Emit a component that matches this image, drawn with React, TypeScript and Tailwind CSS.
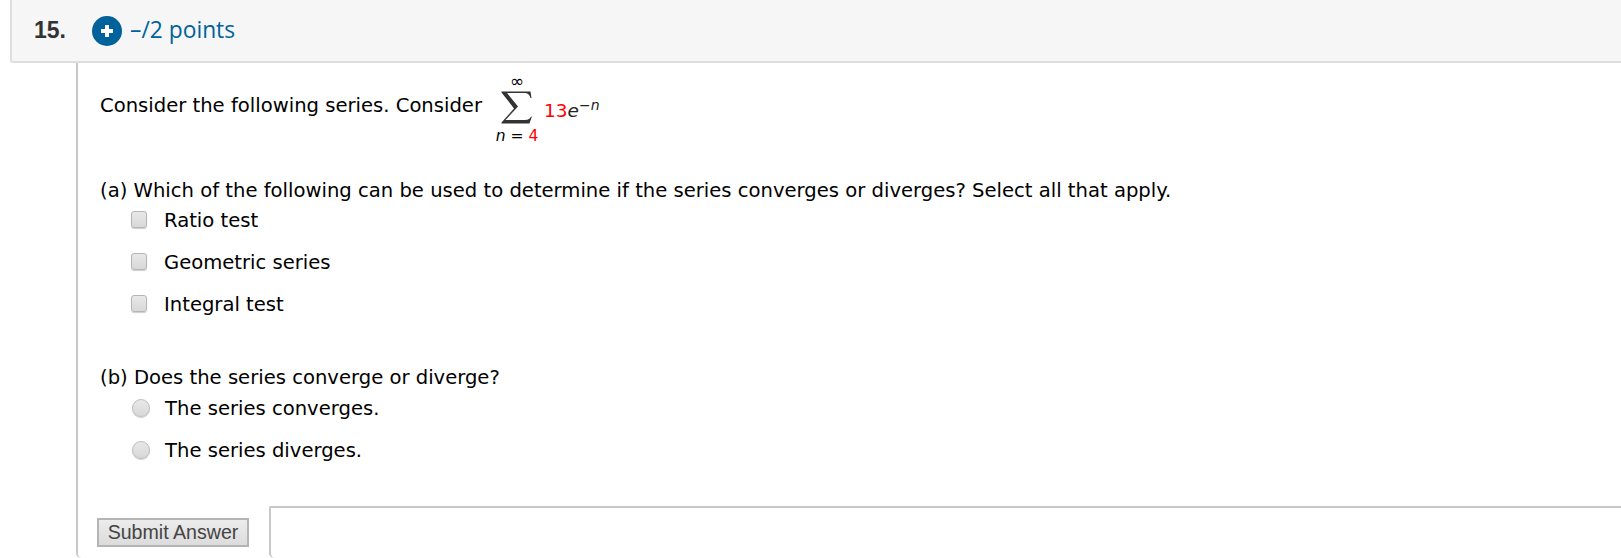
function Sum() {
  return (
    <span className="mr-[5px] ml-[13px] flex w-[44px] flex-col items-center">
      <span className="-mt-[4px] h-[16px] text-[17px] leading-[12px]">∞</span>
      <svg width="31" height="33" viewBox="0 0 31 33" className="block">
        <path d="M0.5 0.5H29.5L30.5 7H29.5C28.5 3.5 27 2 23 2H6L17 15.5L4.5 29H24C27.5 29 29 27.5 30 25.5L30.8 25.8L28.5 32.5H0.5V31.6L13 17.5L0.5 1.4Z" fill="#333" />
      </svg>
      <span className="mt-[6px] text-[15.5px] leading-[12px] whitespace-pre">
        <i>n</i> = <span className="text-[#ff0000]">4</span>
      </span>
    </span>
  );
}

function Check({ label }: { label: string }) {
  return (
    <div className="flex h-[42px] items-center pl-[31px]">
      <span className="-mt-[3px] h-[17px] w-[16px] rounded-[3px] border border-[#b5b5b5] bg-gradient-to-b from-[#e8e8e8] to-[#d8d8d8] shadow-[0_1px_1px_#ccc]" />
      <span className="ml-[17px]">{label}</span>
    </div>
  );
}

function Radio({ label }: { label: string }) {
  return (
    <div className="flex h-[42px] items-center pl-[32px]">
      <span className="-mt-[3px] h-[18px] w-[18px] rounded-full border border-[#bdbdbd] bg-gradient-to-b from-[#e8e8e8] to-[#d8d8d8] shadow-[0_1px_1px_#ccc]" />
      <span className="ml-[15px]">{label}</span>
    </div>
  );
}

export default function App() {
  return (
    <div className="h-[558px] w-[1621px] overflow-hidden bg-white text-black [font-family:'DejaVu_Sans',sans-serif] text-[19.6px]">
      <div className="ml-[10px] flex h-[63px] items-center rounded-bl-[3px] border-b-2 border-l-2 border-[#dedede] bg-[#f6f6f6] pl-[22px]">
        <span className="w-[58px] [font-family:'Liberation_Sans',sans-serif] text-[23px] font-bold text-[#333333]">15.</span>
        <span className="flex h-[30px] w-[30px] items-center justify-center rounded-full bg-[#00629b]">
          <svg width="14" height="14" viewBox="0 0 14 14">
            <path d="M7 1V13M1 7H13" stroke="#fff" strokeWidth="4" />
          </svg>
        </span>
        <span className="ml-[8px] [font-family:'Open_Sans',sans-serif] text-[22.8px] font-medium text-[#00629b]">–/2 points</span>
      </div>
      <div className="ml-[76px] h-[495px] rounded-bl-[5px] border-l-2 border-[#c8c8c8] pl-[22px]">
        <div className="flex items-start pt-[16px]">
          <span className="mt-[14px] leading-[26px]">Consider the following series. Consider</span>
          <Sum />
          <span className="mt-[19px] text-[18.5px] leading-[26px] text-[#ff0000]">
            13<i className="text-[#222]">e</i>
            <sup className="text-[14px] text-[#222]"><i>−n</i></sup>
          </span>
        </div>
        <div className="mt-[36px] h-[26px] leading-[26px]">(a) Which of the following can be used to determine if the series converges or diverges? Select all that apply.</div>
        <div className="-mt-[4px]">
          <Check label="Ratio test" />
          <Check label="Geometric series" />
          <Check label="Integral test" />
        </div>
        <div className="mt-[39px] h-[26px] leading-[26px]">(b) Does the series converge or diverge?</div>
        <div className="-mt-[3px]">
          <Radio label="The series converges." />
          <Radio label="The series diverges." />
        </div>
        <div className="mt-[34px] flex items-start">
          <button className="mt-[12px] -ml-[3px] h-[29px] w-[152px] border-2 border-[#b4b4b4] bg-gradient-to-b from-[#ececec] to-[#dcdcdc] [font-family:'Liberation_Sans',sans-serif] text-[19.6px] leading-none text-[#444444]">Submit Answer</button>
          <div className="ml-[20px] h-[52px] flex-1 rounded-tl-[2px] rounded-bl-[5px] border-t-2 border-l-2 border-[#c8c8c8]" />
        </div>
      </div>
    </div>
  );
}
